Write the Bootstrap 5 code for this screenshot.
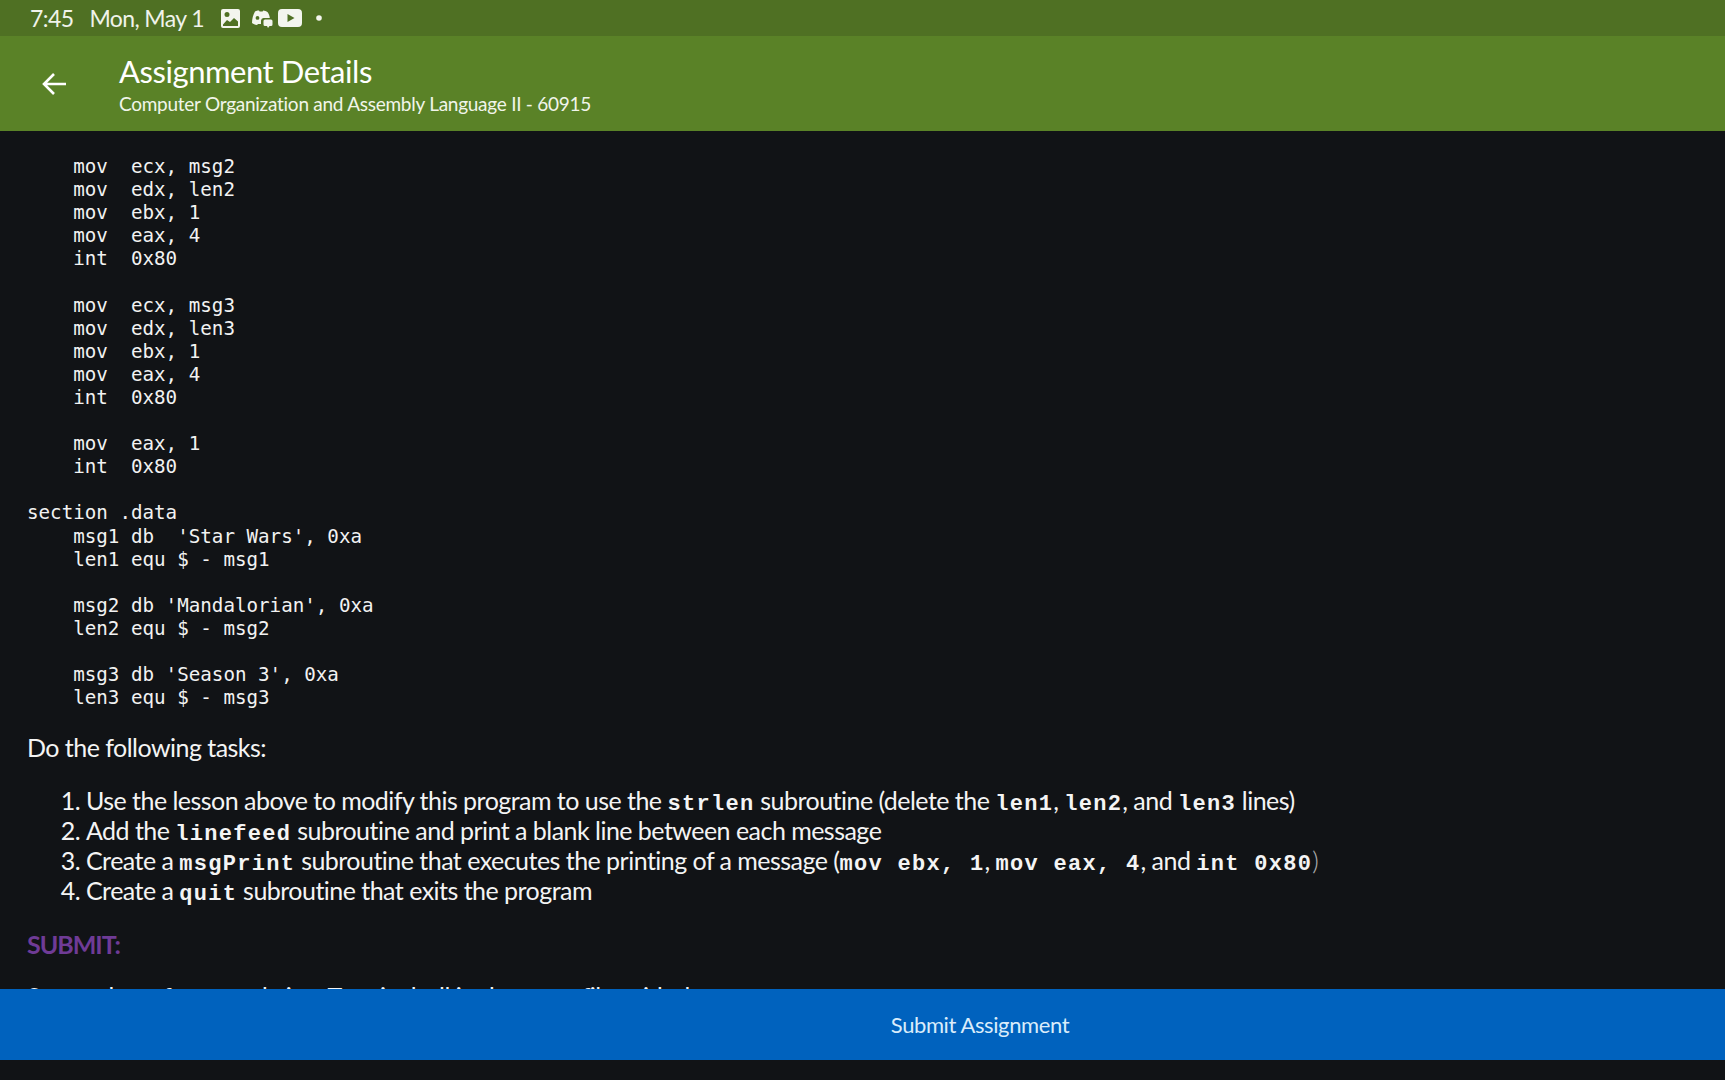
<!doctype html>
<html lang="en">
<head>
<meta charset="utf-8">
<link href="https://cdn.jsdelivr.net/npm/bootstrap@5.3.0/dist/css/bootstrap.min.css" rel="stylesheet">
<style>
html,body{height:100%;margin:0;background:#111316;overflow:hidden}
.phone{height:1080px;color:#f4f4f4;font-family:Lato,"Liberation Sans",sans-serif}
.statusbar{height:36px;background:#4f7023;padding-left:30px;font-size:23px;letter-spacing:-.6px;color:#f0f3ea;flex:none}
.appbar{height:95px;background:#5a8227;flex:none;color:#fff}
.backbtn{width:119px;padding-left:41px;flex:none}
.apptitle{font-size:31px;line-height:36px;letter-spacing:-.45px;margin-top:2px}
.appsub{font-size:19px;line-height:24px;margin-top:3px;letter-spacing:-.26px;color:#f1f5ea}
.scrollarea{flex:1 1 auto;min-height:0;overflow:hidden;padding:24px 27px 0}
.codeblock{font-family:"DejaVu Sans Mono",monospace;font-size:19.2px;line-height:23.1px;color:#f2f2f2;margin:0 0 23px;overflow:hidden}
.para{font-size:25px;line-height:30px;margin:0 0 23px;letter-spacing:-.53px}
.tasklist{font-size:25px;line-height:30px;margin:0 0 24px;padding-left:59px;letter-spacing:-.53px}
.tasklist code{font-family:"Liberation Mono",monospace;font-weight:700;color:#f4f4f4;font-size:22px;letter-spacing:1.3px;line-height:0}
.subhead{font-size:25px;line-height:30px;font-weight:700;color:#6f3b96;margin:0 0 22px;letter-spacing:-1px}
.submitbtn{height:71px;flex:none;background:#0062be;color:#d9ecfb;font-size:22px;border:0;border-radius:0;padding:0 0 0 235px;letter-spacing:-.4px}
.submitbtn:hover{background:#0062be;color:#d9ecfb}
.footspace{height:20px;flex:none;background:#111316}
.thinparen{font-weight:300;opacity:.7}
</style>
</head>
<body>
<div class="phone d-flex flex-column">
  <div class="statusbar d-flex align-items-center">
    <span>7:45</span><span class="ms-3">Mon, May 1</span>
    <span class="d-flex align-items-center ms-3 gap-1">
      <svg width="21" height="21" viewBox="0 0 21 21"><path fill="#f3f5ee" fill-rule="evenodd" d="M3 1h15a2 2 0 0 1 2 2v15a2 2 0 0 1-2 2H3a2 2 0 0 1-2-2V3a2 2 0 0 1 2-2zM3 16.500v1.500h15v-4.500l-4-3.500-4 4-3-2zM7 4a2.500 2.500 0 1 0 0 5 2.500 2.500 0 0 0 0-5z"/></svg>
      <svg width="24" height="21" viewBox="0 0 24 21" class="ms-1"><path fill="#f3f5ee" fill-rule="evenodd" d="M6 3.500c2-1 3-1.200 4-1l.6 1h3l.6-1c1.500.2 3 .6 4.500 1.700 1.300 2 2 4 2.100 5.800h-6.300a3 3 0 0 0-2.500 2.500v3.500h-3l-1 1c-2-.2-4-1-5-2 0-4 1-8 3-11.500zM8.500 8a1.800 1.800 0 1 0 0 3.800 1.800 1.800 0 0 0 0-3.800z"/><path fill="#f3f5ee" d="M16 11.500h6a1.500 1.500 0 0 1 1.500 1.500v3.500a1.500 1.500 0 0 1-1.500 1.500h-1.500l-1.500 2-1-2h-2a1.500 1.500 0 0 1-1.500-1.500v-3.500a1.500 1.500 0 0 1 1.500-1.500z"/></svg>
      <svg width="26" height="20" viewBox="0 0 26 20"><path fill="#f3f5ee" fill-rule="evenodd" d="M5 1h16a4 4 0 0 1 4 4v10a4 4 0 0 1-4 4H5a4 4 0 0 1-4-4V5a4 4 0 0 1 4-4zM10.500 6v8l7-4z"/></svg>
      <svg width="8" height="8" viewBox="0 0 8 8" class="ms-2"><circle cx="4" cy="4" r="2.800" fill="#f3f5ee"/></svg>
    </span>
  </div>
  <div class="appbar d-flex align-items-center">
    <div class="backbtn d-flex">
      <svg width="26" height="26" viewBox="0 0 26 26"><path fill="none" stroke="#fff" stroke-width="2.600" d="M25 13H3M13 3 3 13l10 10"/></svg>
    </div>
    <div>
      <div class="apptitle">Assignment Details</div>
      <div class="appsub">Computer Organization and Assembly Language II - 60915</div>
    </div>
  </div>
  <div class="scrollarea">
<pre class="codeblock">    mov  ecx, msg2
    mov  edx, len2
    mov  ebx, 1
    mov  eax, 4
    int  0x80

    mov  ecx, msg3
    mov  edx, len3
    mov  ebx, 1
    mov  eax, 4
    int  0x80

    mov  eax, 1
    int  0x80

section .data
    msg1 db  'Star Wars', 0xa
    len1 equ $ - msg1

    msg2 db 'Mandalorian', 0xa
    len2 equ $ - msg2

    msg3 db 'Season 3', 0xa
    len3 equ $ - msg3</pre>
    <p class="para">Do the following tasks:</p>
    <ol class="tasklist">
      <li>Use the lesson above to modify this program to use the <code>strlen</code> subroutine (delete the <code>len1</code>, <code>len2</code>, and <code>len3</code> lines)</li>
      <li>Add the <code>linefeed</code> subroutine and print a blank line between each message</li>
      <li>Create a <code>msgPrint</code> subroutine that executes the printing of a message (<code>mov ebx, 1</code>, <code>mov eax, 4</code>, and <code>int 0x80</code><span class="thinparen">)</span></li>
      <li>Create a <code>quit</code> subroutine that exits the program</li>
    </ol>
    <p class="subhead">SUBMIT:</p>
    <p class="para">Screenshot of your code in a Terminal, all in the same file, with the program output</p>
  </div>
  <button class="btn submitbtn text-center">Submit Assignment</button>
  <div class="footspace"></div>
</div>
<script src="https://cdn.jsdelivr.net/npm/bootstrap@5.3.0/dist/js/bootstrap.bundle.min.js"></script>
</body>
</html>
